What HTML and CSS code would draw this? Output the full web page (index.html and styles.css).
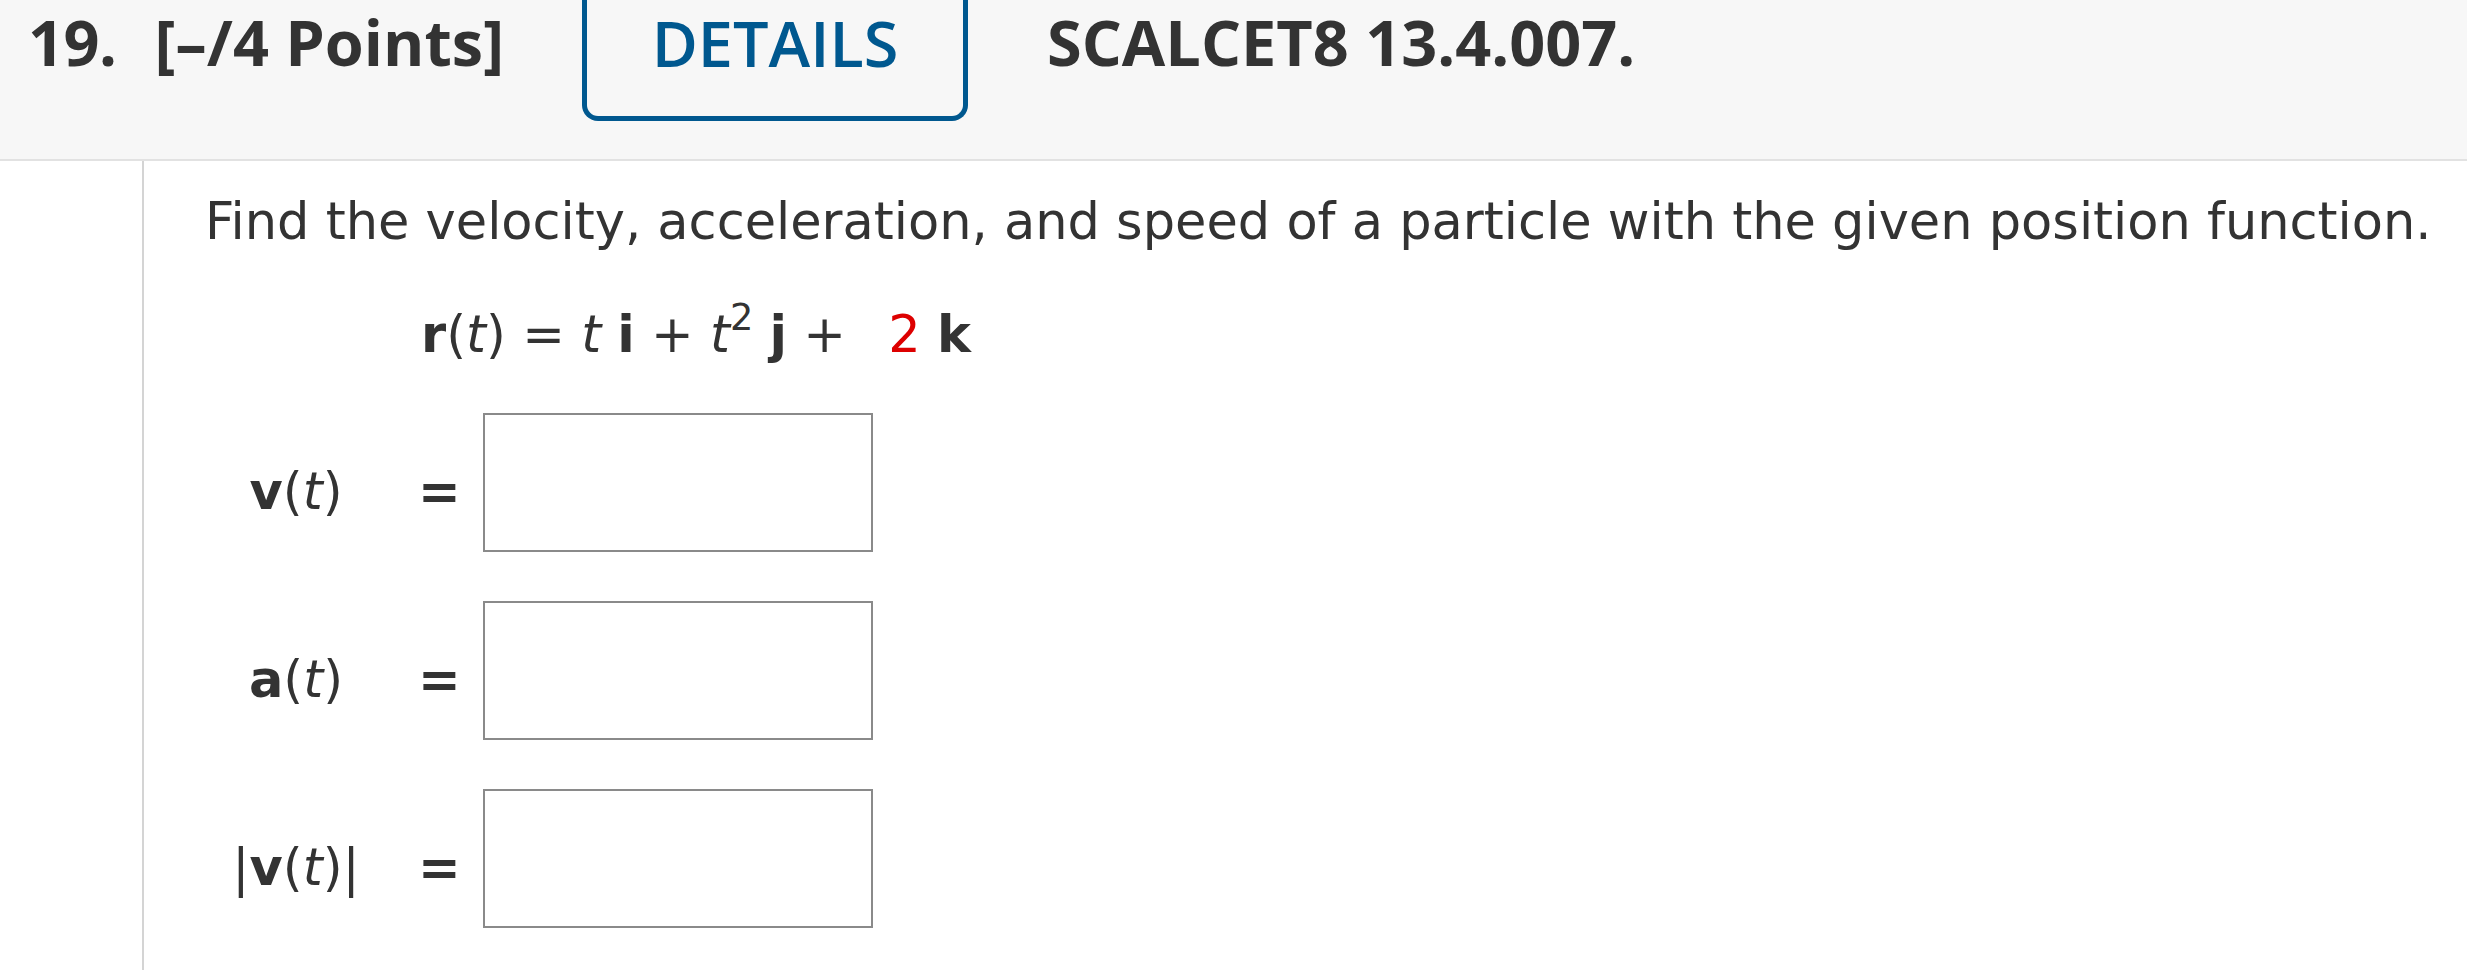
FILE: index.html
```html
<!DOCTYPE html>
<html lang="en">
<head>
<meta charset="utf-8">
<title>SCALCET8 13.4.007.</title>
<link rel="stylesheet" href="styles.css">
</head>
<body>
<header class="qhead">
  <span class="qnum">19.</span>
  <span class="qpts">[&ndash;/4 Points]</span>
  <span class="details">DETAILS</span>
  <span class="qref">SCALCET8 13.4.007.</span>
</header>
<main class="qbody">
  <p class="prompt">Find the velocity, acceleration, and speed of a particle with the given position function.</p>
  <p class="equation"><b>r</b>(<i>t</i>) = <i>t</i> <b>i</b> + <i>t</i><sup>2</sup> <b>j</b> + <span class="red">2</span> <b>k</b></p>
  <div class="answers">
    <div class="lbl"><b>v</b>(<i>t</i>)</div>
    <div class="eq">=</div>
    <div class="box"></div>
    <div class="lbl"><b>a</b>(<i>t</i>)</div>
    <div class="eq">=</div>
    <div class="box"></div>
    <div class="lbl">|<b>v</b>(<i>t</i>)|</div>
    <div class="eq">=</div>
    <div class="box"></div>
  </div>
</main>
</body>
</html>
```
FILE: styles.css
```css
html, body {
  margin: 0;
  padding: 0;
  background: #ffffff;
}
body {
  width: 2467px;
  height: 970px;
  overflow: hidden;
  color: #333333;
}
.qhead {
  height: 159px;
  background: #f7f7f7;
  border-bottom: 2px solid #e2e2e2;
  display: flex;
  align-items: flex-start;
  font-family: "Open Sans", "Liberation Sans", sans-serif;
  color: #333333;
}
.qnum, .qpts, .qref {
  font-size: 63px;
  line-height: 84px;
  font-weight: 700;
  white-space: nowrap;
}
.qnum {
  margin-left: 28px;
  letter-spacing: -0.5px;
}
.qpts {
  margin-left: 38px;
}
.qref {
  margin-left: 79px;
}
.details {
  margin-left: 78px;
  width: 386px;
  height: 121px;
  box-sizing: border-box;
  border: 5px solid #00588f;
  border-top: none;
  border-radius: 0 0 16px 16px;
  color: #00588f;
  font-size: 63px;
  font-weight: 600;
  line-height: 86px;
  text-align: center;
  white-space: nowrap;
}
.qbody {
  margin-left: 142px;
  border-left: 2px solid #d4d4d4;
  height: 809px;
  padding-left: 61px;
  font-family: "DejaVu Sans", Verdana, sans-serif;
  font-size: 51px;
  line-height: 62px;
  color: #333333;
}
.prompt {
  margin: 0;
  padding-top: 30px;
  white-space: nowrap;
}
.equation {
  margin: 51px 0 0 216px;
  white-space: nowrap;
}
.equation b, .lbl b {
  font-weight: 700;
}
.equation sup {
  font-size: 0.72em;
  line-height: 0;
  vertical-align: 0.6em;
}
.red {
  color: #dd0000;
  margin-left: 26px;
}
.answers {
  margin: 47px 0 0 -9px;
  display: grid;
  grid-template-columns: 200px 87px 390px;
  row-gap: 49px;
  align-items: center;
}
.lbl {
  text-align: center;
  padding-top: 18px;
  white-space: nowrap;
}
.eq {
  padding-left: 22px;
  padding-top: 18px;
  font-weight: 700;
}
.box {
  height: 139px;
  box-sizing: border-box;
  border: 2px solid #8a8a8a;
  background: #ffffff;
}
```
